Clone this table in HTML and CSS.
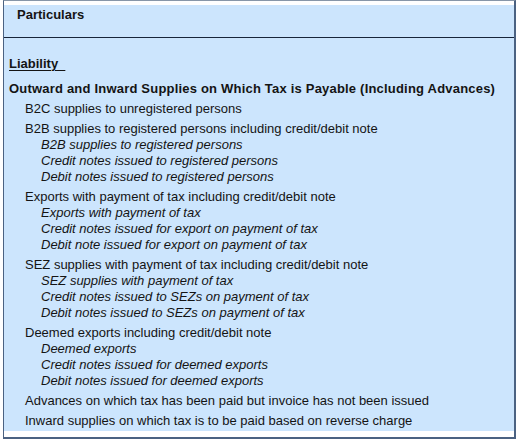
FILE: index.html
```html
<!DOCTYPE html>
<html>
<head>
<meta charset="utf-8">
<link rel="stylesheet" href="styles.css">
</head>
<body>
<div class="page">
  <div class="frame">
    <div class="panel">
      <div class="head">Particulars</div>
      <div class="body">
        <div class="row title"><u>Liability&nbsp;&nbsp;</u></div>
        <div class="row section">Outward and Inward Supplies on Which Tax is Payable (Including Advances)</div>
        <div class="row item">B2C supplies to unregistered persons</div>
        <div class="row item">B2B supplies to registered persons including credit/debit note</div>
        <div class="row sub">B2B supplies to registered persons</div>
        <div class="row sub">Credit notes issued to registered persons</div>
        <div class="row sub">Debit notes issued to registered persons</div>
        <div class="row item">Exports with payment of tax including credit/debit note</div>
        <div class="row sub">Exports with payment of tax</div>
        <div class="row sub">Credit notes issued for export on payment of tax</div>
        <div class="row sub">Debit note issued for export on payment of tax</div>
        <div class="row item">SEZ supplies with payment of tax including credit/debit note</div>
        <div class="row sub">SEZ supplies with payment of tax</div>
        <div class="row sub">Credit notes issued to SEZs on payment of tax</div>
        <div class="row sub">Debit notes issued to SEZs on payment of tax</div>
        <div class="row item">Deemed exports including credit/debit note</div>
        <div class="row sub">Deemed exports</div>
        <div class="row sub">Credit notes issued for deemed exports</div>
        <div class="row sub">Debit notes issued for deemed exports</div>
        <div class="row item">Advances on which tax has been paid but invoice has not been issued</div>
        <div class="row item">Inward supplies on which tax is to be paid based on reverse charge</div>
      </div>
    </div>
  </div>
</div>
</body>
</html>
```

FILE: styles.css
```css
html, body {
  margin: 0;
  padding: 0;
  background: #ffffff;
}
.page {
  width: 516px;
  height: 439px;
  padding-left: 3px;
  box-sizing: border-box;
  overflow: hidden;
}
.frame {
  width: 513px;
  height: 439px;
  box-sizing: border-box;
  border-top: 1px solid #8796a8;
  border-left: 1px solid #4b6282;
  border-right: 2px solid #4b6282;
  border-bottom: 2px solid #4b6282;
  background: #ffffff;
  padding-top: 4px;
}
.panel {
  height: 426px;
  background: #cce5fd;
  font-family: "Liberation Sans", Arial, sans-serif;
  font-size: 13px;
  color: #141414;
  overflow: hidden;
}
.head {
  box-sizing: border-box;
  height: 33px;
  border-bottom: 1px solid #17253a;
  padding: 2px 0 0 13px;
  line-height: 16px;
  font-weight: bold;
}
.body {
  padding: 18px 0 0 5px;
}
.row {
  line-height: 16px;
  white-space: nowrap;
}
.title {
  font-weight: bold;
}
.title u {
  text-decoration-thickness: 1px;
  text-underline-offset: 2px;
}
.section {
  font-weight: bold;
  letter-spacing: 0.2px;
  margin-top: 9px;
}
.item {
  margin-top: 4px;
  padding-left: 16px;
}
.sub {
  padding-left: 32px;
  font-style: italic;
}
```
